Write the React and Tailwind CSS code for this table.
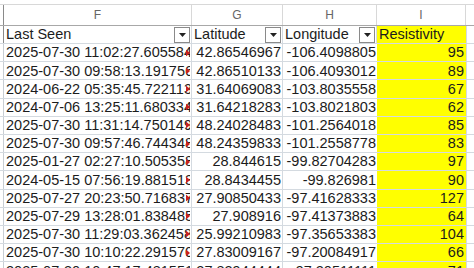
import React from 'react';

const rows = [
  ['2025-07-30 11:02:27.605584', '42.86546967', '-106.4098805', '95'],
  ['2025-07-30 09:58:13.191756', '42.86510133', '-106.4093012', '89'],
  ['2024-06-22 05:35:45.722113', '31.64069083', '-103.8035558', '67'],
  ['2024-07-06 13:25:11.680334', '31.64218283', '-103.8021803', '62'],
  ['2025-07-30 11:31:14.750149', '48.24028483', '-101.2564018', '85'],
  ['2025-07-30 09:57:46.744348', '48.24359833', '-101.2558778', '83'],
  ['2025-01-27 02:27:10.505358', '28.844615', '-99.82704283', '97'],
  ['2024-05-15 07:56:19.881513', '28.8434455', '-99.826981', '90'],
  ['2025-07-27 20:23:50.716837', '27.90850433', '-97.41628333', '127'],
  ['2025-07-29 13:28:01.838485', '27.908916', '-97.41373883', '64'],
  ['2025-07-30 11:29:03.362458', '25.99210983', '-97.35653383', '104'],
  ['2025-07-30 10:10:22.291570', '27.83009167', '-97.20084917', '66'],
  ['2025-07-30 10:47:17.481551', '27.82944444', '-97.20511111', '71'],
];

function Arrow() {
  return (
    <svg className="absolute right-[1px] top-1/2 -translate-y-1/2" width="4" height="7" viewBox="0 0 4 7">
      <path d="M0 0 L4 3.5 L0 7 Z" fill="#c9211e" />
    </svg>
  );
}

function Filter() {
  return (
    <div className="absolute right-[1px] top-[1px] w-[16px] h-[16px] bg-white border border-[#8a8a8a] flex items-center justify-center">
      <svg width="7" height="4" viewBox="0 0 7 4">
        <path d="M0 0 L7 0 L3.5 4 Z" fill="#222" />
      </svg>
    </div>
  );
}

export default function App() {
  return (
    <div className="w-[474px] h-[268px] overflow-hidden bg-white text-[#1c1c1c] font-['Liberation_Sans',Arial,sans-serif] text-[14.5px] leading-none">
      <div className="h-[5px] border-b border-[#d8d8d8]" />
      <div className="flex h-[21px] text-[12px] text-[#666] border-b border-[#a8a8a8]">
        <div className="w-[4px] border-r border-[#8a8a8a]" />
        <div className="w-[188px] border-r border-[#d8d8d8] flex items-center justify-center">F</div>
        <div className="w-[91px] border-r border-[#d8d8d8] flex items-center justify-center">G</div>
        <div className="w-[94px] border-r border-[#d8d8d8] flex items-center justify-center">H</div>
        <div className="w-[89px] border-r border-[#d8d8d8] flex items-center justify-center">I</div>
        <div className="flex-1" />
      </div>
      <div className="flex h-[18px] border-b border-[#d4dae0]">
        <div className="w-[4px] border-r border-[#8a8a8a]" />
        <div className="relative w-[188px] border-r border-[#d4dae0] flex items-center pl-[2px]">
          Last Seen
          <Filter />
        </div>
        <div className="relative w-[91px] border-r border-[#d4dae0] flex items-center pl-[2px]">
          Latitude
          <Filter />
        </div>
        <div className="relative w-[94px] border-r border-[#d4dae0] flex items-center pl-[2px]">
          Longitude
          <Filter />
        </div>
        <div className="w-[89px] bg-[#ffff00] flex items-center pl-[2px]">Resistivity</div>
        <div className="flex-1 border-l border-[#d4dae0]" />
      </div>
      {rows.map((r, i) => (
        <div key={i} className="flex h-[18.2px] border-b border-[#d4dae0]">
          <div className="w-[4px] border-r border-[#c8ced4]" />
          <div className="relative w-[188px] border-r border-[#d4dae0] flex items-center pl-[2px] overflow-hidden">
            <span className="whitespace-nowrap overflow-hidden w-[184px] block">{r[0]}</span>
            <Arrow />
          </div>
          <div className="w-[91px] border-r border-[#d4dae0] flex items-center justify-end pr-[1px] whitespace-nowrap overflow-hidden">{r[1]}</div>
          <div className="w-[94px] flex items-center justify-end pr-[1px] whitespace-nowrap overflow-hidden">{r[2]}</div>
          <div className="w-[89px] bg-[#ffff00] flex items-center justify-end pr-[2px]">{r[3]}</div>
          <div className="flex-1 border-l border-[#d4dae0]" />
        </div>
      ))}
    </div>
  );
}
